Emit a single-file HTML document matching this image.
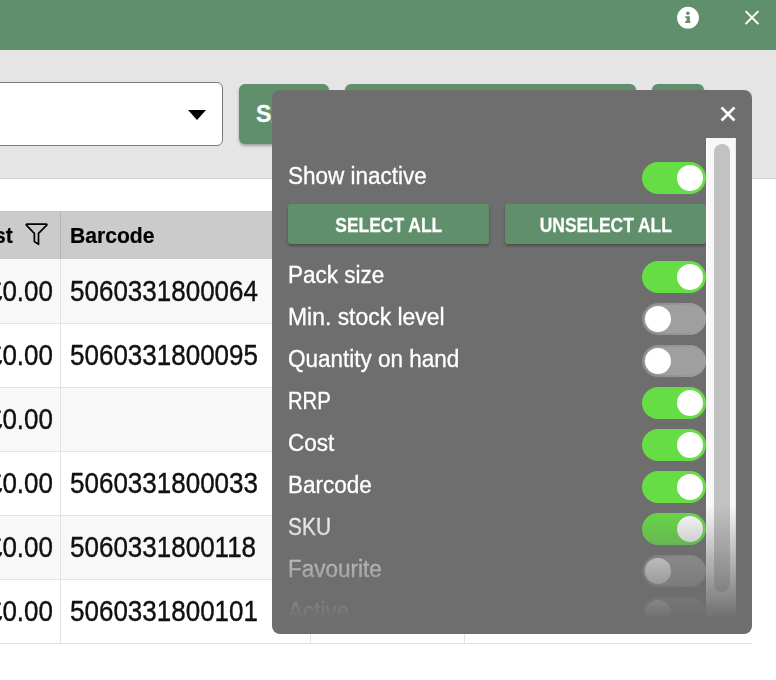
<!DOCTYPE html>
<html><head><meta charset="utf-8">
<style>
*{box-sizing:border-box;margin:0;padding:0}
html,body{width:776px;height:680px;overflow:hidden;background:#fff;font-family:"Liberation Sans",sans-serif;position:relative}
.abs{position:absolute}
#hdr{left:0;top:0;width:776px;height:50px;background:#608f6c}
#band{left:0;top:50px;width:776px;height:129px;background:#e5e5e5;border-bottom:1px solid #d3d3d3}
#sel{left:-10px;top:82px;width:233px;height:64px;background:#fff;border:1px solid #7a7a7a;border-radius:6px}
.tri{width:0;height:0;border-left:9px solid transparent;border-right:9px solid transparent;border-top:10px solid #000}
.gbtn{background:#608f6c;border-radius:6px;box-shadow:0 2px 3px rgba(0,0,0,.3);color:#fff;font-weight:bold}
#thead{left:0;top:211px;width:752px;height:48px;background:#cbcbcb;border-top:1px solid #c6c6c6;border-bottom:1px solid #c6c6c6}
.row{left:0;width:752px;height:64px;border-bottom:1px solid #e3e3e3}
.vl{width:1px;background:#e3e3e3}
.cell{font-size:26px;color:#111;line-height:1;margin-top:-2px;transform:scaleY(1.1);transform-origin:0 80%;-webkit-text-stroke:0.35px #111}
#panel{left:272px;top:90px;width:480px;height:544px;background:#6e6e6e;border-radius:8px}
.lbl{font-size:22.5px;color:#fff;line-height:1;left:16px;margin-top:-0.5px;transform:scaleY(1.07);transform-origin:0 100%;-webkit-text-stroke:0.3px #fff}
.tg{left:370px;width:64px;height:32px;border-radius:16px}
.tg.on{background:#66dd44}
.tg.off{background:linear-gradient(to right,#8a8a8a 0,#939393 45%,#9f9f9f 100%)}
.tg.off::before{content:"";position:absolute;left:2px;top:2px;right:2px;bottom:2px;border-radius:14px;background:#9f9f9f}
.knob{position:absolute;top:3px;width:26px;height:26px;border-radius:50%;background:#fff}
.tg.on .knob{left:35px}
.tg.off .knob{left:3px}
.pbtn{top:114px;width:201px;height:40px;background:#608f6c;border-radius:3px;box-shadow:0 2px 3px rgba(0,0,0,.3);color:#fff;font-weight:bold;font-size:19.5px;text-align:center;line-height:40px}
.pbtn span{display:inline-block;transform:scale(0.895,1.04);margin-top:1px;-webkit-text-stroke:0.25px #fff}
</style></head><body>
<div id="hdr" class="abs"></div>
<!-- info icon -->
<svg class="abs" style="left:674px;top:4px" width="28" height="28" viewBox="0 0 28 28">
<circle cx="14" cy="13.7" r="10.9" fill="#fff"/>
<circle cx="13.9" cy="9.25" r="1.8" fill="#608f6c"/>
<path d="M11.3 12.35H15.85V17.1H16.3V18.9H11.3V17.1H12.6V14H11.3Z" fill="#608f6c"/>
</svg>
<svg class="abs" style="left:744px;top:10px" width="16" height="16" viewBox="0 0 16 16">
<path d="M1.6 1.2L14.4 14M14.4 1.2L1.6 14" stroke="#fff" stroke-width="1.9"/>
</svg>
<div id="band" class="abs"></div>
<div id="sel" class="abs"><div class="tri abs" style="left:197px;top:27px"></div></div>
<div class="abs gbtn" style="left:239px;top:84px;width:90px;height:60px;font-size:23px;line-height:60px;padding-left:17px;-webkit-text-stroke:0.3px #fff">SAVE</div>
<div class="abs gbtn" style="left:345px;top:84px;width:291px;height:60px"></div>
<div class="abs gbtn" style="left:652px;top:84px;width:52px;height:60px"></div>

<div id="thead" class="abs">
  <div class="abs" style="right:739px;top:12.5px;font-size:22px;font-weight:bold;color:#000;line-height:1;transform:scaleX(0.96);transform-origin:100% 0;-webkit-text-stroke:0.2px #000">Cost</div>
  <svg class="abs" style="left:22px;top:8px" width="30" height="30" viewBox="0 0 30 30">
    <path d="M5.2 4.1H23.9Q25.6 4.1 24.5 5.4L16.5 13.3V24.3L12.35 21.6V13.3L4.6 5.4Q3.6 4.1 5.2 4.1Z" fill="none" stroke="#000" stroke-width="1.7" stroke-linejoin="round"/>
  </svg>
  <div class="abs" style="left:70px;top:12.5px;font-size:22px;font-weight:bold;color:#000;line-height:1;transform:scaleX(0.96);transform-origin:0 0;-webkit-text-stroke:0.2px #000">Barcode</div>
  <div class="abs" style="left:60px;top:-1px;width:1px;height:48px;background:#b5b5b5"></div>
</div>

<div class="abs row" style="top:259px;height:65px;background:#f8f8f8"></div>
<div class="abs row" style="top:324px;background:#fff"></div>
<div class="abs row" style="top:388px;background:#f8f8f8"></div>
<div class="abs row" style="top:452px;background:#fff"></div>
<div class="abs row" style="top:516px;background:#f8f8f8"></div>
<div class="abs row" style="top:580px;background:#fff"></div>
<div class="abs vl" style="left:60px;top:259px;height:384px"></div>
<div class="abs vl" style="left:310px;top:259px;height:384px"></div>
<div class="abs vl" style="left:464px;top:259px;height:384px"></div>

<div class="abs cell" style="right:723px;top:281px">£0.00</div>
<div class="abs cell" style="left:70px;top:281px">5060331800064</div>
<div class="abs cell" style="right:723px;top:345px">£0.00</div>
<div class="abs cell" style="left:70px;top:345px">5060331800095</div>
<div class="abs cell" style="right:723px;top:409px">£0.00</div>
<div class="abs cell" style="right:723px;top:473px">£0.00</div>
<div class="abs cell" style="left:70px;top:473px">5060331800033</div>
<div class="abs cell" style="right:723px;top:537px">£0.00</div>
<div class="abs cell" style="left:70px;top:537px">5060331800118</div>
<div class="abs cell" style="right:723px;top:601px">£0.00</div>
<div class="abs cell" style="left:70px;top:601px">5060331800101</div>

<div id="panel" class="abs">
  <svg class="abs" style="left:448px;top:15.8px" width="16" height="16" viewBox="0 0 16 16">
    <path d="M1.5 1.5L14.5 14.5M14.5 1.5L1.5 14.5" stroke="#fff" stroke-width="2.6"/>
  </svg>
  <div class="abs" id="scroll" style="left:0;top:48px;width:464px;height:479px;-webkit-mask-image:linear-gradient(to bottom,#000 0,#000 367px,rgba(0,0,0,.02) 479px)">
    <div class="abs lbl" style="top:28px">Show inactive</div>
    <div class="abs tg on" style="top:24px"><div class="knob"></div></div>
    <div class="abs pbtn" style="left:16px;top:66px"><span>SELECT ALL</span></div>
    <div class="abs pbtn" style="left:233px;top:66px"><span>UNSELECT ALL</span></div>
    <div class="abs lbl" style="top:127px">Pack size</div>
    <div class="abs tg on" style="top:123px"><div class="knob"></div></div>
    <div class="abs lbl" style="top:169px;transform:scale(1.018,1.07)">Min. stock level</div>
    <div class="abs tg off" style="top:165px"><div class="knob"></div></div>
    <div class="abs lbl" style="top:211px">Quantity on hand</div>
    <div class="abs tg off" style="top:207px"><div class="knob"></div></div>
    <div class="abs lbl" style="top:253px;transform:scale(0.9,1.07)">RRP</div>
    <div class="abs tg on" style="top:249px"><div class="knob"></div></div>
    <div class="abs lbl" style="top:295px">Cost</div>
    <div class="abs tg on" style="top:291px"><div class="knob"></div></div>
    <div class="abs lbl" style="top:337px">Barcode</div>
    <div class="abs tg on" style="top:333px"><div class="knob"></div></div>
    <div class="abs lbl" style="top:379px;transform:scale(0.93,1.07)">SKU</div>
    <div class="abs tg on" style="top:375px"><div class="knob"></div></div>
    <div class="abs lbl" style="top:421px">Favourite</div>
    <div class="abs tg off" style="top:417px"><div class="knob"></div></div>
    <div class="abs lbl" style="top:463px">Active</div>
    <div class="abs tg off" style="top:459px"><div class="knob"></div></div>
    <!-- scrollbar -->
    <div class="abs" style="left:434px;top:0;width:30px;height:479px;background:#f8f8f8;border-left:1px solid #fff;border-right:1px solid #eaeaea">
      <div class="abs" style="left:7px;top:6px;width:16px;height:448px;border-radius:8px;background:#c2c2c2"></div>
    </div>
  </div>
</div>
</body></html>
